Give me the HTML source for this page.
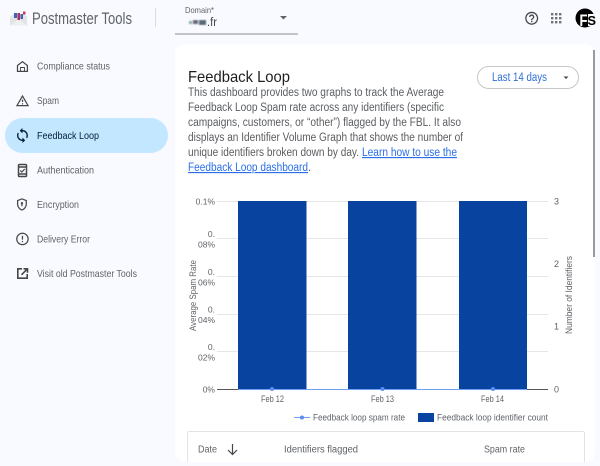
<!DOCTYPE html>
<html><head><meta charset="utf-8"><title>Postmaster Tools</title>
<style>
html,body{margin:0;padding:0;width:600px;height:466px;overflow:hidden;background:#f8faff}
svg{display:block}
text{font-family:"Liberation Sans",sans-serif}
.n{font-size:10.5px;fill:#5f6368}
.p{font-size:11.5px;fill:#5a5d61}
.a{font-size:9px;fill:#5f6368}
.t{font-size:8.5px;fill:#5f6368}
.g{stroke:#e6e6e6;stroke-width:1}
.i{fill:#444746}
</style></head><body>
<svg width="600" height="466" viewBox="0 0 600 466" xmlns="http://www.w3.org/2000/svg">
<defs><filter id="b"><feGaussianBlur stdDeviation="0.7"/></filter>
<clipPath id="av"><circle cx="585" cy="18" r="9.500"/></clipPath></defs>
<rect width="600" height="466" fill="#f8faff"/>

<!-- logo -->
<path d="M10 17 L14 14 H24 L27 17 V25.500 H10Z" fill="#e2e3e5"/>
<path d="M10 25.500 L18.500 19 L27 25.500Z" fill="#eeeff0"/>
<rect x="14" y="13" width="3" height="5" fill="#3e62b8"/><rect x="17.500" y="13" width="2.500" height="7" fill="#a8325e"/><rect x="20.500" y="14" width="2.500" height="5" fill="#3e62b8"/><rect x="23" y="11.500" width="2.500" height="3" fill="#d03a5a"/>
<text x="32" y="24" font-size="17" fill="#5f6368" textLength="100" lengthAdjust="spacingAndGlyphs">Postmaster Tools</text>
<line x1="155.500" y1="8" x2="155.500" y2="27" stroke="#dadce0"/>

<text x="185" y="13" font-size="8.500" fill="#5f6368" textLength="29" lengthAdjust="spacingAndGlyphs">Domain*</text>
<g filter="url(#b)"><rect x="189" y="21" width="3" height="3" fill="#8aa"/><rect x="193" y="20" width="5" height="4" fill="#667"/><rect x="199" y="20" width="7" height="5" fill="#567"/></g>
<text x="207" y="26" font-size="11.500" fill="#444" textLength="10" lengthAdjust="spacingAndGlyphs">.fr</text>
<path d="M280 16h7l-3.500 3.500z" fill="#5f6368"/>
<line x1="175" y1="34" x2="298" y2="34" stroke="#8a8d91"/>

<!-- top right -->
<g transform="translate(523.900,10.500) scale(.65)"><path class="i" d="M11 18h2v-2h-2v2zm1-16C6.480 2 2 6.480 2 12s4.480 10 10 10 10-4.480 10-10S17.520 2 12 2zm0 18c-4.410 0-8-3.590-8-8s3.590-8 8-8 8 3.590 8 8-3.590 8-8 8zm0-14c-2.210 0-4 1.790-4 4h2c0-1.100.9-2 2-2s2 .9 2 2c0 2-3 1.750-3 5h2c0-2.250 3-2.500 3-5 0-2.210-1.790-4-4-4z"/></g>
<g fill="#6f7377">
<rect x="551" y="13" width="2.400" height="2.400"/><rect x="555" y="13" width="2.400" height="2.400"/><rect x="559" y="13" width="2.400" height="2.400"/>
<rect x="551" y="17" width="2.400" height="2.400"/><rect x="555" y="17" width="2.400" height="2.400"/><rect x="559" y="17" width="2.400" height="2.400"/>
<rect x="551" y="21" width="2.400" height="2.400"/><rect x="555" y="21" width="2.400" height="2.400"/><rect x="559" y="21" width="2.400" height="2.400"/>
</g>
<circle cx="585" cy="18" r="9.500" fill="#000"/>
<path d="M588 14h9v12h-9z" fill="#fff" clip-path="url(#av)"/>
<text x="579.500" y="26" font-size="17" font-weight="bold" fill="#fff" textLength="8" lengthAdjust="spacingAndGlyphs">F</text>
<text x="587.500" y="25" font-size="13" font-weight="bold" fill="#000" textLength="8.500" lengthAdjust="spacingAndGlyphs">S</text>

<!-- nav -->
<rect x="5" y="118" width="163" height="35" rx="17.500" fill="#c2e7ff"/>
<g transform="translate(15,59) scale(.62)"><path class="i" d="M12 3 3 10v11h18V10zm7 16h-3v-6H8v6H5v-8l7-5.500 7 5.500z M9.500 14.500h5V19h-5z"/></g>
<g transform="translate(15.300,93.600) scale(.6)"><path class="i" d="M12 5.990 19.530 19H4.470L12 5.990M12 2 1 21h22L12 2zm1 14h-2v2h2v-2zm0-6h-2v4h2v-4z"/></g>
<g transform="translate(14.300,127.300) scale(.68)"><path fill="#001d35" d="M12 4V1L8 5l4 4V6c3.310 0 6 2.690 6 6 0 1.010-.25 1.970-.7 2.800l1.460 1.460C19.540 15.030 20 13.570 20 12c0-4.420-3.580-8-8-8zm0 14c-3.310 0-6-2.690-6-6 0-1.010.25-1.970.7-2.800L5.240 7.740C4.460 8.970 4 10.430 4 12c0 4.420 3.580 8 8 8v3l4-4-4-4v3z"/></g>
<rect x="18.500" y="164.500" width="8" height="12" rx="1" fill="none" stroke="#444746" stroke-width="1.500"/>
<path d="M18.500 167h8M18.500 174h8" stroke="#444746" stroke-width="1.500"/>
<path d="M20.300 170.500l1.500 1.500 2.900-2.900" fill="none" stroke="#444746" stroke-width="1.200"/>
<g transform="translate(14.500,197) scale(.62)"><path class="i" d="M12 2 4 5v6.100c0 5 3.400 9.700 8 10.900 4.600-1.200 8-5.900 8-10.900V5zm6 9.100c0 4-2.600 7.700-6 8.800-3.400-1.100-6-4.800-6-8.800V6.400l6-2.300 6 2.300z M12 8a2 2 0 0 0-1 3.700V15h2v-3.300A2 2 0 0 0 12 8z"/></g>
<g transform="translate(14.900,231.400) scale(.63)"><path class="i" d="M11 15h2v2h-2zm0-8h2v6h-2zm.99-5C6.470 2 2 6.480 2 12s4.470 10 9.990 10C17.520 22 22 17.520 22 12S17.520 2 11.990 2zM12 20c-4.420 0-8-3.580-8-8s3.580-8 8-8 8 3.580 8 8-3.580 8-8 8z"/></g>
<path d="M22 268.800H17.800V278.200H27.200V274" fill="none" stroke="#444746" stroke-width="1.600"/>
<path d="M23.500 268.800H27.500V272.800M27.200 269.100L21.500 274.800" fill="none" stroke="#444746" stroke-width="1.600"/>

<text class="n" x="37" y="69.500" textLength="73" lengthAdjust="spacingAndGlyphs">Compliance status</text>
<text class="n" x="37" y="104" textLength="22" lengthAdjust="spacingAndGlyphs">Spam</text>
<text class="n" x="37" y="139" textLength="62" lengthAdjust="spacingAndGlyphs" style="fill:#001d35">Feedback Loop</text>
<text class="n" x="37" y="173.500" textLength="57" lengthAdjust="spacingAndGlyphs">Authentication</text>
<text class="n" x="37" y="208" textLength="42" lengthAdjust="spacingAndGlyphs">Encryption</text>
<text class="n" x="37" y="242.500" textLength="53" lengthAdjust="spacingAndGlyphs">Delivery Error</text>
<text class="n" x="37" y="277" textLength="100" lengthAdjust="spacingAndGlyphs">Visit old Postmaster Tools</text>

<!-- card -->
<rect x="175" y="44" width="420" height="418" rx="10" fill="#fff"/>
<rect x="593" y="50" width="2" height="207" fill="#9a9a9a"/>

<text x="188" y="82" font-size="16" fill="#1f1f1f" textLength="102" lengthAdjust="spacingAndGlyphs">Feedback Loop</text>
<text class="p" x="188" y="96" textLength="256" lengthAdjust="spacingAndGlyphs">This dashboard provides two graphs to track the Average</text>
<text class="p" x="188" y="111" textLength="256" lengthAdjust="spacingAndGlyphs">Feedback Loop Spam rate across any identifiers (specific</text>
<text class="p" x="188" y="126" textLength="273" lengthAdjust="spacingAndGlyphs">campaigns, customers, or “other”) flagged by the FBL. It also</text>
<text class="p" x="188" y="141" textLength="275" lengthAdjust="spacingAndGlyphs">displays an Identifier Volume Graph that shows the number of</text>
<text class="p" x="188" y="156" textLength="171" lengthAdjust="spacingAndGlyphs">unique identifiers broken down by day.</text>
<text class="p" x="362" y="156" textLength="95" lengthAdjust="spacingAndGlyphs" style="fill:#2a6fe8;text-decoration:underline">Learn how to use the</text>
<text class="p" x="188" y="171" textLength="120" lengthAdjust="spacingAndGlyphs" style="fill:#2a6fe8;text-decoration:underline">Feedback Loop dashboard</text>
<text class="p" x="308" y="171">.</text>

<rect x="477.500" y="66.500" width="101" height="22" rx="11" fill="#fff" stroke="#c4c7c5"/>
<text x="492" y="81" font-size="11.500" fill="#2f6fd8" textLength="55" lengthAdjust="spacingAndGlyphs">Last 14 days</text>
<path d="M563.500 76.500h5l-2.500 2.500z" fill="#444746"/>

<!-- chart -->
<line class="g" x1="217" y1="201.500" x2="548" y2="201.500"/>
<line class="g" x1="217" y1="238.500" x2="548" y2="238.500"/>
<line class="g" x1="217" y1="276.500" x2="548" y2="276.500"/>
<line class="g" x1="217" y1="314.500" x2="548" y2="314.500"/>
<line class="g" x1="217" y1="351.500" x2="548" y2="351.500"/>
<rect x="238" y="201" width="68.500" height="188" fill="#08439f"/>
<rect x="348" y="201" width="68.500" height="188" fill="#08439f"/>
<rect x="459" y="201" width="68" height="188" fill="#08439f"/>
<line x1="217" y1="389.500" x2="548" y2="389.500" stroke="#555"/>
<line x1="238" y1="389.500" x2="527" y2="389.500" stroke="#6f9ef5"/>
<circle cx="272" cy="389" r="2" fill="#5b8def"/><circle cx="382.500" cy="389" r="2" fill="#5b8def"/><circle cx="493" cy="389" r="2" fill="#5b8def"/>

<g text-anchor="end">
<text class="t" x="215" y="204.500">0.1%</text>
<text class="t" x="215" y="237">0.</text><text class="t" x="215" y="247.500">08%</text>
<text class="t" x="215" y="275">0.</text><text class="t" x="215" y="285.500">06%</text>
<text class="t" x="215" y="312.500">0.</text><text class="t" x="215" y="323">04%</text>
<text class="t" x="215" y="350">0.</text><text class="t" x="215" y="360.500">02%</text>
<text class="t" x="215" y="392.500">0%</text>
</g>
<text class="a" x="554" y="204.500">3</text>
<text class="a" x="554" y="267">2</text>
<text class="a" x="554" y="329.500">1</text>
<text class="a" x="554" y="392.500">0</text>
<text class="a" transform="translate(196,331) rotate(-90)" textLength="71" lengthAdjust="spacingAndGlyphs">Average Spam Rate</text>
<text class="a" transform="translate(572,334) rotate(-90)" textLength="78" lengthAdjust="spacingAndGlyphs">Number of Identifiers</text>
<text class="a" x="261" y="402" textLength="23" lengthAdjust="spacingAndGlyphs">Feb 12</text>
<text class="a" x="371" y="402" textLength="23" lengthAdjust="spacingAndGlyphs">Feb 13</text>
<text class="a" x="481" y="402" textLength="23" lengthAdjust="spacingAndGlyphs">Feb 14</text>

<line x1="294" y1="417.500" x2="310" y2="417.500" stroke="#6f9ef5"/>
<circle cx="302" cy="417.500" r="2" fill="#5b8def"/>
<text class="a" x="313" y="420.500" textLength="92" lengthAdjust="spacingAndGlyphs">Feedback loop spam rate</text>
<rect x="418" y="413" width="16" height="9" fill="#08439f"/>
<text class="a" x="437" y="420.500" textLength="111" lengthAdjust="spacingAndGlyphs">Feedback loop identifier count</text>

<!-- table -->
<path d="M187.500 462V433a1.500 1.500 0 0 1 1.500-1.500H583a1.500 1.500 0 0 1 1.500 1.500V462" fill="#fff" stroke="#e3e3e3"/>
<text x="198" y="452.500" font-size="10" fill="#5f6368" textLength="19" lengthAdjust="spacingAndGlyphs">Date</text>
<path d="M232.500 444v10M228 450l4.500 4.500L237 450" fill="none" stroke="#444746" stroke-width="1.200"/>
<text x="284" y="452.500" font-size="10" fill="#5f6368" textLength="74" lengthAdjust="spacingAndGlyphs">Identifiers flagged</text>
<text x="484" y="452.500" font-size="10" fill="#5f6368" textLength="41" lengthAdjust="spacingAndGlyphs">Spam rate</text>
</svg>
</body></html>
